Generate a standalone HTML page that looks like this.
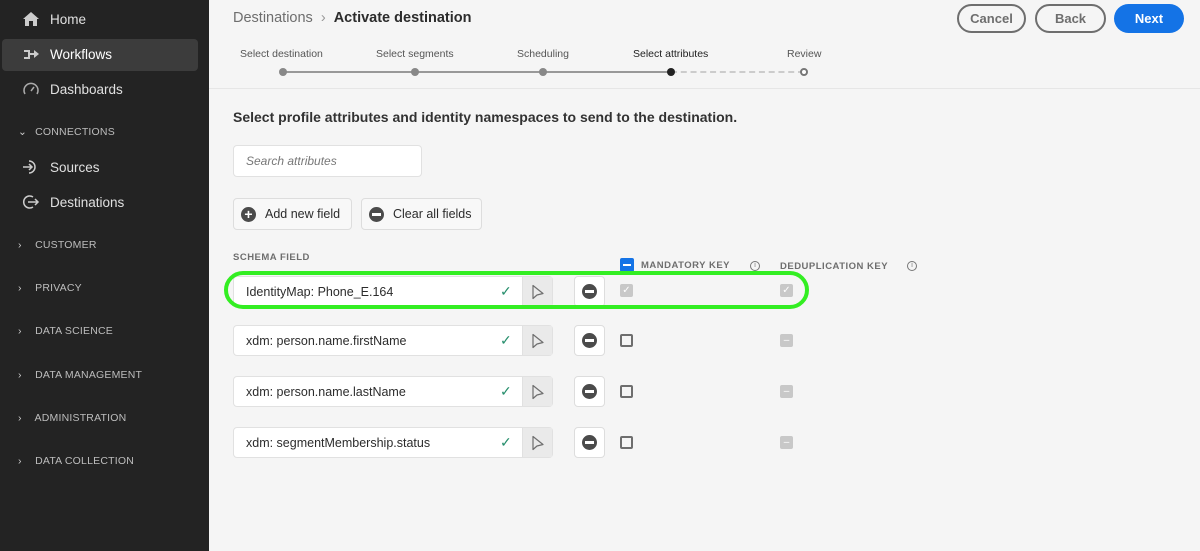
<!DOCTYPE html><html><head><style>
*{box-sizing:border-box;margin:0;padding:0}
body{width:1200px;height:551px;overflow:hidden;font-family:"Liberation Sans",sans-serif;background:#f5f5f5;position:relative;color:#2c2c2c}
.sb{position:absolute;left:0;top:0;width:209px;height:551px;background:#232323;color:#e0e0e0}
.it{position:absolute;left:22px;font-size:13.5px;display:flex;align-items:center;gap:10px}
.sel{position:absolute;left:2px;top:39px;width:196px;height:32px;background:#3c3c3c;border-radius:4px}
.cat{position:absolute;left:18px;font-size:10.5px;color:#bdbdbd;letter-spacing:.2px}
.cat span{display:inline-block;width:14px;color:#ccc}
.a{position:absolute}
.btn{position:absolute;top:4px;height:29px;border-radius:15px;font-size:13px;font-weight:bold;display:flex;align-items:center;justify-content:center}
.st{position:absolute;top:48px;font-size:10.5px;color:#555}
.dot{position:absolute;top:68px;width:8px;height:8px;border-radius:50%;background:#888}
.fld{position:absolute;left:233px;width:320px;height:31px;background:#fff;border:1px solid #e1e1e1;border-radius:4px;font-size:12.5px;display:flex;align-items:center;padding-left:12px}
.fld .ck{position:absolute;left:266px;color:#268e6c;font-size:14px}
.fld .pk{position:absolute;right:0;top:0;width:30px;height:29px;background:#eaeaea;border-left:1px solid #e1e1e1}
.fld .pk svg{position:absolute;left:8px;top:7px}
.rm{position:absolute;left:574px;width:31px;height:31px;background:#fff;border:1px solid #ddd;border-radius:4px}
.rm:after{content:"";position:absolute;left:7px;top:7px;width:15px;height:15px;border-radius:50%;background:#4b4b4b}
.rm:before{content:"";position:absolute;left:10px;top:13px;width:9px;height:3px;background:#fff;z-index:1}
.cb{position:absolute;left:620px;width:13px;height:13px;border:2px solid #6e6e6e;border-radius:2px}
.dis{position:absolute;width:13px;height:13px;background:#c8c8c8;border-radius:2px;color:#fff;font-size:10px;text-align:center;line-height:13px}
.hd{position:absolute;font-size:9.5px;font-weight:bold;color:#6e6e6e;letter-spacing:.5px}
.info{position:absolute;width:10px;height:10px;border:1px solid #777;border-radius:50%;font-size:7px;text-align:center;line-height:8px;color:#777}
</style></head><body>
<div class="sb">
<div class="sel"></div>
<div class="it" style="top:11px"><svg width="18" height="16"><path d="M1 8L9 1l8 7h-2v7h-4v-5H7v5H3V8z" fill="#ccc"/></svg>Home</div>
<div class="it" style="top:46px;color:#fff"><svg width="18" height="16"><path d="M2 4h6v3h4V4l5 4-5 4V9H8v4H2v-2h4V6H2z" fill="#ccc"/></svg>Workflows</div>
<div class="it" style="top:81px"><svg width="18" height="16"><path d="M3 13a7 7 0 1 1 12 0" stroke="#aaa" stroke-width="1.5" fill="none"/><path d="M9 10l3-4" stroke="#aaa" stroke-width="1.5"/></svg>Dashboards</div>
<div class="cat" style="top:126px"><span>⌄</span> CONNECTIONS</div>
<div class="it" style="top:159px"><svg width="18" height="16"><path d="M7 2a6 6 0 1 1 0 12M1 8h9M7 5l3 3-3 3" stroke="#ccc" stroke-width="1.5" fill="none"/></svg>Sources</div>
<div class="it" style="top:194px"><svg width="18" height="16"><path d="M11 3a6 6 0 1 0 0 10M6 8h10M13 5l3 3-3 3" stroke="#ccc" stroke-width="1.5" fill="none"/></svg>Destinations</div>
<div class="cat" style="top:239px"><span>›</span> CUSTOMER</div>
<div class="cat" style="top:282px"><span>›</span> PRIVACY</div>
<div class="cat" style="top:325px"><span>›</span> DATA SCIENCE</div>
<div class="cat" style="top:369px"><span>›</span> DATA MANAGEMENT</div>
<div class="cat" style="top:412px"><span>›</span> ADMINISTRATION</div>
<div class="cat" style="top:455px"><span>›</span> DATA COLLECTION</div>
</div>
<div class="a" style="left:233px;top:10px;font-size:14.5px;color:#6e6e6e">Destinations <span style="color:#999;margin:0 4px">›</span> <b style="color:#2c2c2c">Activate destination</b></div>
<div class="btn" style="left:957px;width:69px;border:2px solid #6e6e6e;color:#6e6e6e">Cancel</div>
<div class="btn" style="left:1035px;width:71px;border:2px solid #6e6e6e;color:#6e6e6e">Back</div>
<div class="btn" style="left:1114px;width:70px;background:#1473e6;color:#fff">Next</div>
<div class="st" style="left:240px">Select destination</div>
<div class="st" style="left:376px">Select segments</div>
<div class="st" style="left:517px">Scheduling</div>
<div class="st" style="left:633px;color:#222">Select attributes</div>
<div class="st" style="left:787px">Review</div>
<div class="a" style="left:283px;top:71px;width:388px;height:2px;background:#999"></div>
<div class="a" style="left:671px;top:71px;width:133px;border-top:2px dashed #ccc"></div>
<div class="dot" style="left:279px"></div><div class="dot" style="left:411px"></div><div class="dot" style="left:539px"></div>
<div class="dot" style="left:667px;background:#222"></div>
<div class="dot" style="left:800px;background:#fff;border:2px solid #777"></div>
<div class="a" style="left:209px;top:88px;width:991px;height:1px;background:#e6e6e6"></div>
<div class="a" style="left:233px;top:109px;font-size:14px;font-weight:bold;color:#323232">Select profile attributes and identity namespaces to send to the destination.</div>
<div class="a" style="left:233px;top:145px;width:189px;height:32px;background:#fff;border:1px solid #e1e1e1;border-radius:4px;font-size:12px;font-style:italic;color:#777;padding:8px 12px">Search attributes</div>
<div class="a" style="left:233px;top:198px;width:119px;height:32px;background:#f8f8f8;border:1px solid #ddd;border-radius:4px;font-size:12.5px;padding:8px 0 0 31px">Add new field<div style="position:absolute;left:7px;top:8px;width:15px;height:15px;border-radius:50%;background:#4b4b4b;color:#fff;font-size:14px;line-height:14px;text-align:center;font-weight:bold">+</div></div>
<div class="a" style="left:361px;top:198px;width:121px;height:32px;background:#f8f8f8;border:1px solid #ddd;border-radius:4px;font-size:12.5px;padding:8px 0 0 31px">Clear all fields<div style="position:absolute;left:7px;top:8px;width:15px;height:15px;border-radius:50%;background:#4b4b4b"><div style="position:absolute;left:3px;top:6px;width:9px;height:3px;background:#fff"></div></div></div>
<div class="hd" style="left:233px;top:252px">SCHEMA FIELD</div>
<div class="a" style="left:620px;top:258px;width:14px;height:14px;background:#1473e6;border-radius:2px"><div style="position:absolute;left:3px;top:6px;width:8px;height:2px;background:#fff"></div></div>
<div class="hd" style="left:641px;top:260px">MANDATORY KEY</div>
<div class="info" style="left:750px;top:261px">i</div>
<div class="hd" style="left:780px;top:261px">DEDUPLICATION KEY</div>
<div class="info" style="left:907px;top:261px">i</div>
<div class="fld" style="top:276px">IdentityMap: Phone_E.164<span class="ck">✓</span><span class="pk"><svg width="14" height="16"><path d="M2 1.5v13l4-3.5 6-1.5z" fill="none" stroke="#6e6e6e" stroke-width="1.2" stroke-linejoin="round"/></svg></span></div>
<div class="fld" style="top:325px">xdm: person.name.firstName<span class="ck">✓</span><span class="pk"><svg width="14" height="16"><path d="M2 1.5v13l4-3.5 6-1.5z" fill="none" stroke="#6e6e6e" stroke-width="1.2" stroke-linejoin="round"/></svg></span></div>
<div class="fld" style="top:376px">xdm: person.name.lastName<span class="ck">✓</span><span class="pk"><svg width="14" height="16"><path d="M2 1.5v13l4-3.5 6-1.5z" fill="none" stroke="#6e6e6e" stroke-width="1.2" stroke-linejoin="round"/></svg></span></div>
<div class="fld" style="top:427px">xdm: segmentMembership.status<span class="ck">✓</span><span class="pk"><svg width="14" height="16"><path d="M2 1.5v13l4-3.5 6-1.5z" fill="none" stroke="#6e6e6e" stroke-width="1.2" stroke-linejoin="round"/></svg></span></div>
<div class="rm" style="top:276px"></div><div class="rm" style="top:325px"></div><div class="rm" style="top:376px"></div><div class="rm" style="top:427px"></div>
<div class="dis" style="left:620px;top:284px">✓</div><div class="dis" style="left:780px;top:284px">✓</div>
<div class="cb" style="top:334px"></div><div class="cb" style="top:385px"></div><div class="cb" style="top:436px"></div>
<div class="dis" style="left:780px;top:334px">–</div><div class="dis" style="left:780px;top:385px">–</div><div class="dis" style="left:780px;top:436px">–</div>
<div class="a" style="left:224px;top:271px;width:585px;height:38px;border:4px solid #33ee22;border-radius:19px"></div>
</body></html>
